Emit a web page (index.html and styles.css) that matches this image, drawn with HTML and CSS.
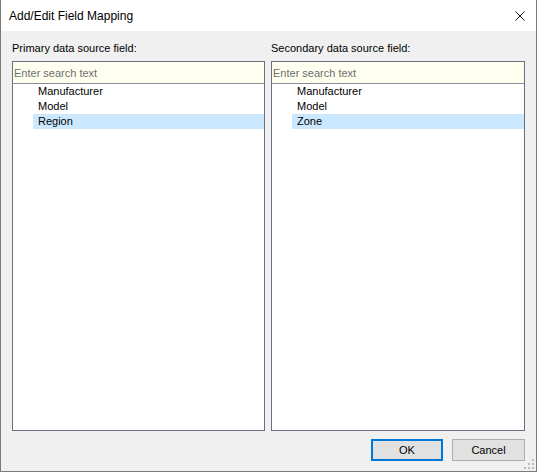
FILE: index.html
```html
<!DOCTYPE html>
<html lang="en">
	<head>
		<meta charset="UTF-8" />
		<meta name="viewport" content="width=device-width, initial-scale=1.0" />
		<title>Add/Edit Field Mapping</title>
		<link rel="stylesheet" href="styles.css">
	</head>
	<body>
		<div class="dialog">
			<div class="titlebar">
				<span class="title">Add/Edit Field Mapping</span>
				<button class="close" title="Close">
					<svg width="10" height="10" viewBox="0 0 10 10">
						<path d="M0.5 0.5 L9.5 9.5 M9.5 0.5 L0.5 9.5" stroke="#1a1a1a" stroke-width="1" fill="none" />
					</svg>
				</button>
			</div>

			<div class="content">
				<div class="columns">
					<div class="column">
						<label class="caption">Primary data source field:</label>
						<div class="field-list">
							<input class="search" type="text" placeholder="Enter search text" />
							<ul class="items">
								<li>Manufacturer</li>
								<li>Model</li>
								<li class="selected">Region</li>
							</ul>
						</div>
					</div>
					<div class="column">
						<label class="caption">Secondary data source field:</label>
						<div class="field-list">
							<input class="search" type="text" placeholder="Enter search text" />
							<ul class="items">
								<li>Manufacturer</li>
								<li>Model</li>
								<li class="selected">Zone</li>
							</ul>
						</div>
					</div>
				</div>

				<div class="buttons">
					<button class="btn default">OK</button>
					<button class="btn">Cancel</button>
				</div>
			</div>

			<!-- size grip -->
			<svg class="grip" width="10" height="10" viewBox="0 0 10 10">
				<rect x="8" y="0" width="2" height="2" fill="#bcbcbc" />
				<rect x="4" y="4" width="2" height="2" fill="#bcbcbc" />
				<rect x="8" y="4" width="2" height="2" fill="#bcbcbc" />
				<rect x="0" y="8" width="2" height="2" fill="#bcbcbc" />
				<rect x="4" y="8" width="2" height="2" fill="#bcbcbc" />
				<rect x="8" y="8" width="2" height="2" fill="#bcbcbc" />
			</svg>
		</div>
	</body>
</html>
```

FILE: styles.css
```css
* {
	box-sizing: border-box;
}

body {
	margin: 0;
	font-family: "Liberation Sans", Arial, sans-serif;
	font-size: 11px;
	color: #000;
	background: #fff;
}

.dialog {
	position: relative;
	width: 537px;
	height: 472px;
	display: flex;
	flex-direction: column;
	border: 1px solid #7a7a7a;
	border-top: none;
	background: #f0f0f0;
}

/* Title bar */
.titlebar {
	height: 31px;
	flex: none;
	display: flex;
	align-items: center;
	justify-content: space-between;
	background: #fff;
	padding-left: 8px;
}

.title {
	font-size: 12px;
	color: #000;
}

.close {
	width: 32px;
	height: 31px;
	border: none;
	background: none;
	padding: 0;
	display: flex;
	align-items: center;
	justify-content: center;
}

/* Body */
.content {
	flex: 1;
	display: flex;
	flex-direction: column;
	padding: 10px 11px 10px 11px;
}

.columns {
	flex: 1;
	display: grid;
	grid-template-columns: 253px 254px;
	gap: 6px;
}

.column {
	display: flex;
	flex-direction: column;
}

.caption {
	height: 15px;
	line-height: 15px;
	margin-bottom: 5px;
}

.field-list {
	flex: 1;
	display: flex;
	flex-direction: column;
	background: #fff;
	border: 1px solid #6b7080;
}

.search {
	height: 22px;
	border: none;
	border-bottom: 1px solid #8a8e99;
	background: #fffff0;
	font-family: inherit;
	font-size: 11px;
	padding: 0 1px;
	outline: none;
}

.search::placeholder {
	color: #6d6d6d;
}

.items {
	list-style: none;
	margin: 0;
	padding: 0 0 0 20px;
	font-size: 11px;
}

.items li {
	height: 15px;
	line-height: 15px;
	padding-left: 5px;
}

.items li.selected {
	background: #cce8ff;
}

/* Dialog buttons */
.buttons {
	display: flex;
	justify-content: flex-end;
	gap: 9px;
	margin-top: 8px;
}

.btn {
	width: 73px;
	height: 22px;
	font-family: inherit;
	font-size: 11px;
	background: #e1e1e1;
	border: 1px solid #adadad;
	padding: 0;
	color: #000;
}

.btn.default {
	width: 72px;
	border: 2px solid #0078d7;
}

.grip {
	position: absolute;
	right: 2px;
	bottom: 2px;
}
```
